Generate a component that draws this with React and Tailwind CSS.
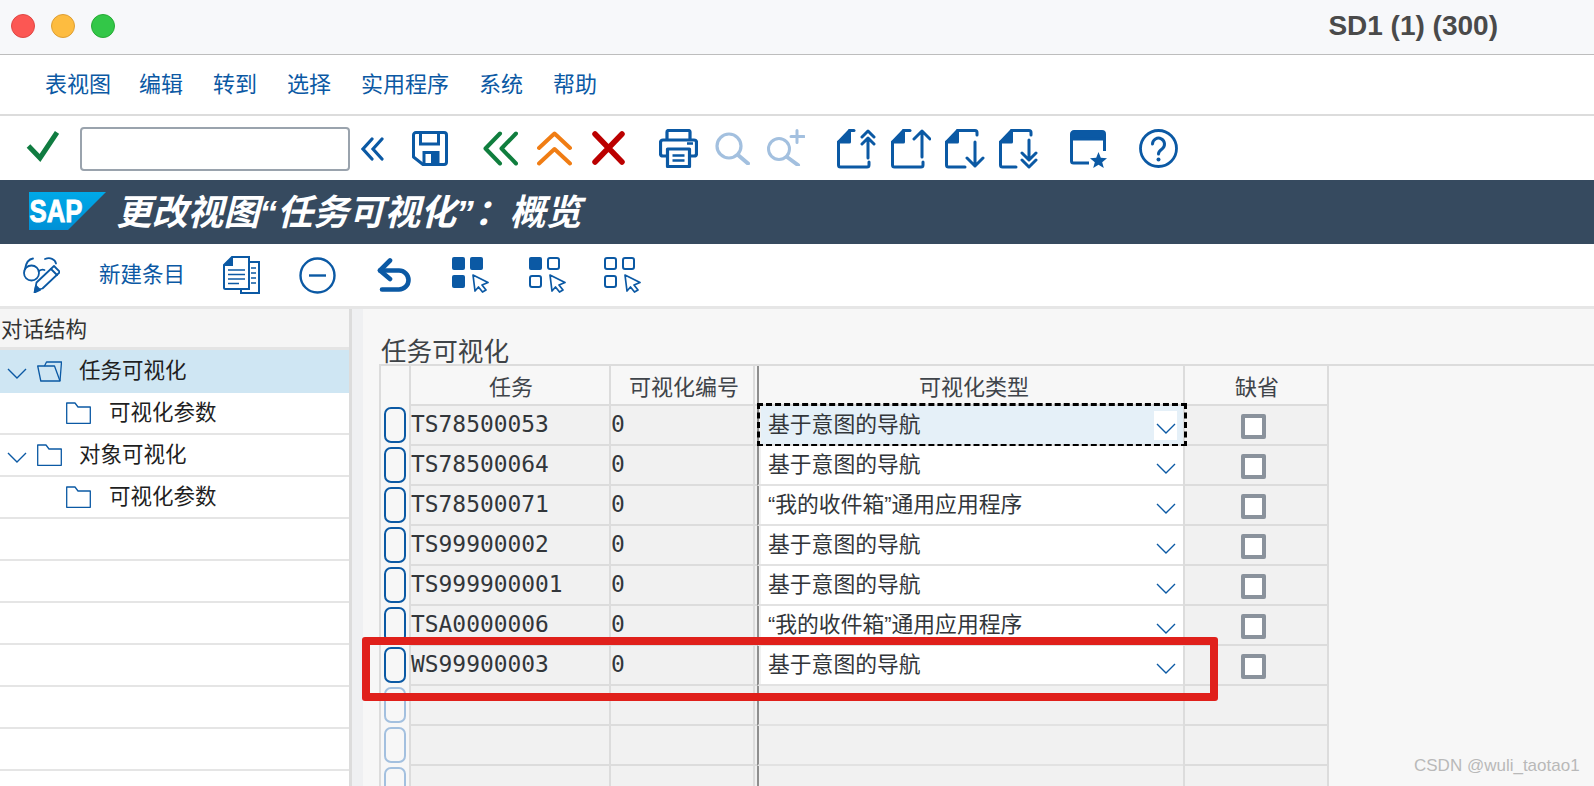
const FONT = { fontFamily: '"Liberation Sans", "Noto Sans CJK SC", sans-serif' };
const BLUE = '#0b59a4';
const PALE = '#a3c0df';

const menus = ['表视图', '编辑', '转到', '选择', '实用程序', '系统', '帮助'];

const rows = [
  { task: 'TS78500053', type: '基于意图的导航', focus: true },
  { task: 'TS78500064', type: '基于意图的导航' },
  { task: 'TS78500071', type: '“我的收件箱”通用应用程序' },
  { task: 'TS99900002', type: '基于意图的导航' },
  { task: 'TS999900001', type: '基于意图的导航' },
  { task: 'TSA0000006', type: '“我的收件箱”通用应用程序' },
  { task: 'WS99900003', type: '基于意图的导航' },
  {},
  {},
  {},
];

const Chevron = ({ className = 'w-[20px] h-[11px]' }) => (
  <svg viewBox="0 0 20 11" className={className} fill="none" stroke={BLUE} strokeWidth="1.4">
    <path d="M1 1 L10 10 L19 1" />
  </svg>
);

const Folder = ({ open }) =>
  open ? (
    <svg viewBox="0 0 25 21" className="w-[25px] h-[21px]" fill="none" stroke={BLUE} strokeWidth="1.3" strokeLinejoin="round">
      <path d="M0.7 5 L3.8 20 H23 L24.5 1 H9.5 L7.5 5 Z" />
      <path d="M7.5 5 H17.5 L23 20" />
    </svg>
  ) : (
    <svg viewBox="0 0 25 22" className="w-[25px] h-[22px]" fill="none" stroke={BLUE} strokeWidth="1.3">
      <path d="M0.7 21.3 V1 H9 L12 5 H24.3 V21.3 Z" strokeLinejoin="round" />
    </svg>
  );

const Check = () => (
  <svg viewBox="0 0 33 32" className="w-[33px] h-[32px] -mt-[4px]" fill="none" stroke="#107c41" strokeWidth="5">
    <path d="M2.5 16 L14 28 L31 2.5" />
  </svg>
);

const DoubleLeft = () => (
  <svg viewBox="0 0 23 24" className="w-[23px] h-[24px] mt-[2px]" fill="none" stroke={BLUE} strokeWidth="3.2" strokeLinecap="round">
    <path d="M11 2 L2 12 L11 22 M21 2 L12 12 L21 22" />
  </svg>
);

const Save = () => (
  <svg viewBox="0 0 36 35" className="w-[36px] h-[35px]" fill="none" stroke={BLUE} strokeWidth="3">
    <path d="M4 1.5 H32 a2.5 2.5 0 0 1 2.5 2.5 V31 a2.5 2.5 0 0 1 -2.5 2.5 H11 L1.5 26 V4 a2.5 2.5 0 0 1 2.5 -2.5 Z" strokeLinejoin="round" />
    <path d="M8.5 2 V13 H26.5 V2" />
    <path d="M12 33 V21.5 H26 V33" />
    <rect x="19" y="22" width="7" height="11" fill={BLUE} stroke="none" />
  </svg>
);

const GreenBack = () => (
  <svg viewBox="0 0 35 35" className="w-[35px] h-[35px]" fill="none" stroke="#107e3e" strokeWidth="4" strokeLinecap="round" strokeLinejoin="round">
    <path d="M17 2.5 L2.5 17.5 L17 32.5 M33 2.5 L18.5 17.5 L33 32.5" />
  </svg>
);

const OrangeUp = () => (
  <svg viewBox="0 0 35 35" className="w-[35px] h-[35px]" fill="none" stroke="#f07d14" strokeWidth="4" strokeLinecap="round" strokeLinejoin="round">
    <path d="M2 17 L17.5 2.5 L33 17 M2 32.5 L17.5 18 L33 32.5" />
  </svg>
);

const RedClose = () => (
  <svg viewBox="0 0 33 34" className="w-[33px] h-[34px]" fill="none" stroke="#bb0000" strokeWidth="5.5" strokeLinecap="round">
    <path d="M3 3 L30 31 M30 3 L3 31" />
  </svg>
);

const Printer = () => (
  <svg viewBox="0 0 39 39" className="w-[39px] h-[39px]" fill="none" stroke={BLUE} strokeWidth="3.2" strokeLinejoin="round">
    <path d="M8 11 V3 a1.5 1.5 0 0 1 1.5 -1.5 H29.5 a1.5 1.5 0 0 1 1.5 1.5 V11" />
    <path d="M8 27 H4 a2.5 2.5 0 0 1 -2.5 -2.5 V13.5 a2.5 2.5 0 0 1 2.5 -2.5 H35 a2.5 2.5 0 0 1 2.5 2.5 V24.5 a2.5 2.5 0 0 1 -2.5 2.5 H31" />
    <rect x="8.5" y="20" width="22" height="17.5" />
    <path d="M13.5 26.5 H25.5 M13.5 31.5 H25.5 M28 14.5 H34" strokeWidth="2.6" />
  </svg>
);

const Search = () => (
  <svg viewBox="0 0 35 33" className="w-[35px] h-[33px]" fill="none" stroke={PALE} strokeWidth="3.2" strokeLinecap="round">
    <circle cx="14" cy="14" r="12" />
    <path d="M23 23 L33 31.5" strokeWidth="4" />
  </svg>
);

const SearchPlus = () => (
  <svg viewBox="0 0 38 37" className="w-[38px] h-[37px]" fill="none" stroke={PALE} strokeWidth="3" strokeLinecap="round">
    <circle cx="12" cy="20" r="10.5" />
    <path d="M20 28 L31 36" strokeWidth="4" />
    <path d="M30 1.5 V13.5 M24 7.5 H37" />
  </svg>
);

// page icon with the folded corner, the arrow goes in as children
const DocArrow = ({ top, bottom, rightTop, rightBottom, children }) => (
  <svg viewBox="0 0 40 40" className="w-[40px] h-[40px]" fill="none" stroke={BLUE} strokeWidth="3" strokeLinecap="round" strokeLinejoin="round">
    <path d="M1.5 13 L12.5 1.5 V13 Z" fill={BLUE} />
    <path d={`M12.5 1.5 H${top}${rightTop ? ' H30 a2 2 0 0 1 2 2 V6' : ''}`} />
    <path d={`M1.5 13 V36 a2 2 0 0 0 2 2 H${bottom}${rightBottom ? ' H30 a2 2 0 0 0 2 -2 V33' : ''}`} />
    {children}
  </svg>
);

const StarWindow = () => (
  <svg viewBox="0 0 37 38" className="w-[37px] h-[38px]" fill="none" stroke={BLUE} strokeWidth="3" strokeLinejoin="round">
    <path d="M1.5 4 a2.5 2.5 0 0 1 2.5 -2.5 H32 a2.5 2.5 0 0 1 2.5 2.5 V9 H1.5 Z" fill={BLUE} />
    <path d="M1.5 9 V31 a2 2 0 0 0 2 2 H19 M34.5 9 V21" />
    <polygon points="28.5,22 30.8,27.8 37,28.2 32.2,32.2 33.8,38 28.5,34.8 23.2,38 24.8,32.2 20,28.2 26.2,27.8" fill={BLUE} stroke="none" />
  </svg>
);

const Help = () => (
  <svg viewBox="0 0 39 39" className="w-[39px] h-[39px]" fill="none" stroke={BLUE} strokeWidth="2.8" strokeLinecap="round">
    <circle cx="19.5" cy="19.5" r="18" />
    <path d="M13.5 15 a6 6 0 1 1 9.5 5 c-2.5 1.7 -3.5 2.7 -3.5 5" strokeWidth="3" />
    <circle cx="19.5" cy="30.5" r="2" fill={BLUE} stroke="none" />
  </svg>
);

const SapLogo = () => (
  <svg viewBox="0 0 77 38" className="w-[77px] h-[38px]">
    <defs>
      <linearGradient id="sapfill" x1="0" y1="0" x2="0" y2="1">
        <stop offset="0" stopColor="#00a9e8" />
        <stop offset="1" stopColor="#0090d6" />
      </linearGradient>
    </defs>
    <polygon points="0,0 77,0 39,38 0,38" fill="url(#sapfill)" />
    <text x="0.5" y="30" fill="#fff" stroke="#fff" strokeWidth="0.9" fontFamily="Liberation Sans" fontWeight="bold" fontSize="32" textLength="53" lengthAdjust="spacingAndGlyphs">SAP</text>
  </svg>
);

const GlassesPen = () => (
  <svg viewBox="0 0 37 36" className="w-[37px] h-[36px]" fill="none" stroke={BLUE} strokeWidth="1.8" strokeLinejoin="round" strokeLinecap="round">
    <circle cx="8.5" cy="16" r="7.5" />
    <path d="M2 12 C3 6 6 2 10 1.5" />
    <path d="M16 14 C18 12.5 20 12.5 21.5 13" />
    <path d="M22 2 C27 0 32 2 33 6.5" />
    <path d="M12 33.5 L13.5 25.5 L31 9 L37 15 L19.5 31.5 Z" />
    <path d="M11.5 35.5 L13 29 L17 33 Z" fill={BLUE} />
    <path d="M28 12 L34 18" />
  </svg>
);

const CopyDoc = () => (
  <svg viewBox="0 0 37 38" className="w-[37px] h-[38px]" fill="none" stroke={BLUE} strokeWidth="2">
    <path d="M1 9 L9 1 V9 Z" fill={BLUE} />
    <path d="M9 1 H26 V33 H2.5 a1.5 1.5 0 0 1 -1.5 -1.5 V9" />
    <path d="M26 6 H36 V37 H18 V33" />
    <path d="M5 14 H22 M5 18.5 H22 M5 23 H22 M5 27.5 H16 M28 12 H33 M28 17 H33 M28 22 H33 M28 27 H33" strokeWidth="1.6" />
  </svg>
);

const MinusCircle = () => (
  <svg viewBox="0 0 37 37" className="w-[37px] h-[37px]" fill="none" stroke={BLUE} strokeWidth="2.4">
    <circle cx="18.5" cy="18.5" r="17" />
    <path d="M10 18.5 H27" />
  </svg>
);

const Undo = () => (
  <svg viewBox="0 0 35 34" className="w-[35px] h-[34px]" fill="none" stroke={BLUE} strokeWidth="4.6" strokeLinecap="round" strokeLinejoin="round">
    <path d="M13 2.5 L3 12.5 L13 21" />
    <path d="M3 12.5 H22 a9 9 0 0 1 0 19 H5" />
  </svg>
);

const Cursor = () => (
  <path d="M21 18 L36 25.5 L30 28 L34 33 L30.5 35 L26.5 30 L23 34 Z" fill="#fff" stroke={BLUE} strokeWidth="1.7" strokeLinejoin="round" />
);

const SelectIcon = ({ filled }) => {
  const square = (x, y, on) => (
    <rect x={on ? x : x + 1} y={on ? y : y + 1} width={on ? 13 : 11} height={on ? 13 : 11} rx="2" fill={on ? BLUE : 'none'} stroke={on ? 'none' : BLUE} strokeWidth="2" />
  );
  return (
    <svg viewBox="0 0 37 36" className="w-[37px] h-[36px]">
      {square(0, 0, filled >= 1)}
      {square(18, 0, filled >= 2)}
      {square(0, 18, filled >= 2)}
      <Cursor />
    </svg>
  );
};

const TreeRow = ({ text, sub, open, selected }) => (
  <div className={`flex items-center text-[21.5px] text-[#1f1f1f] ${selected ? 'bg-[#cfe6f3] h-[43px]' : 'h-[42px] border-b-2 border-[#e5e5e5]'}`}>
    {sub ? (
      <div className="ml-[66px]"><Folder /></div>
    ) : (
      <>
        <div className="ml-[7px] mt-[4px]"><Chevron /></div>
        <div className="ml-[10px]"><Folder open={open} /></div>
      </>
    )}
    <span className={sub ? 'ml-[18px]' : 'ml-[17px]'}>{text}</span>
  </div>
);

const HeaderCell = ({ className, children }) => (
  <div className={`flex items-center justify-center pt-[4px] border-l-2 border-b-2 border-[#dcdcdc] bg-[#f7f7f7] h-[40px] text-[22px] text-[#3f444a] ${className}`}>
    {children}
  </div>
);

const TableRow = ({ row, index }) => {
  const filled = !!row.task;
  return (
    <div className="flex h-[40px] relative">
      <div className="w-[28px] bg-[#f7f7f7] pl-[3px] pt-[1px]">
        <div className={`w-[22px] h-[36px] rounded-[7px] border-2 ${index < 7 ? 'border-[#0b59a4]' : 'border-[#a3c0df]'}`} />
      </div>
      <div className="w-[200px] border-l-2 border-b-2 border-[#dcdcdc] bg-[#f1f1f1] pb-[2px] flex items-center font-['DejaVu_Sans_Mono'] text-[22.9px] text-[#32363a]">
        {row.task}
      </div>
      <div className="w-[144px] border-l-2 border-b-2 border-[#dcdcdc] bg-[#f1f1f1] pb-[2px] flex items-center font-['DejaVu_Sans_Mono'] text-[22.9px] text-[#32363a]">
        {filled && '0'}
      </div>
      <div className="w-[4px] border-l-2 border-b-2 border-[#dcdcdc] bg-[#f1f1f1]" />
      <div className="w-[426px] border-l-2 border-[#8f8f8f] border-b-2 border-b-[#e2e2e2] bg-[#f1f1f1] pl-[2px]">
        {filled && (
          <div className={`h-full flex items-center justify-between pl-[7px] pr-[6px] text-[21.8px] text-[#32363a] ${row.focus ? 'bg-[#e5f0f8]' : 'bg-white'}`}>
            <span>{row.type}</span>
            <div className={`w-[23px] h-[29px] flex items-end justify-center pb-[6px] mt-[1px] ${row.focus ? 'bg-white' : ''}`}>
              <Chevron />
            </div>
          </div>
        )}
      </div>
      <div className="w-[146px] border-x-2 border-b-2 border-[#dcdcdc] bg-[#f1f1f1] pl-[56px] pt-[8px]">
        {filled && <div className="w-[25px] h-[25px] rounded-[2px] border-[4px] border-[#8a929c] bg-white" />}
      </div>
      {row.focus && (
        <div className="absolute left-[376px] -top-[3px] w-[430px] h-[44px] border-[3px] border-dashed border-black" />
      )}
    </div>
  );
};

export default function App() {
  return (
    <div className="relative w-[1594px] h-[786px] overflow-hidden bg-white" style={FONT}>
      <div className="h-[55px] flex items-center justify-between pl-[11px] pr-[96px] bg-[#f7f8fa] border-b border-[#bdbdbd]">
        <div className="flex gap-4 -mt-[2px]">
          <div className="w-[24px] h-[24px] rounded-full bg-[#fc5753] border border-[#df4744]" />
          <div className="w-[24px] h-[24px] rounded-full bg-[#fdbc40] border border-[#de9f34]" />
          <div className="w-[24px] h-[24px] rounded-full bg-[#33c748] border border-[#27aa35]" />
        </div>
        <div className="text-[28px] font-bold text-[#4a4a4a] -mt-[3px]">SD1 (1) (300)</div>
      </div>

      <div className="h-[61px] flex items-center gap-[30px] pl-[45px] border-b-2 border-[#dcdcdc] text-[22px] text-[#0b59a4]">
        {menus.map((m, i) => (
          <span key={m} className={i === 0 ? '-mr-[2px]' : ''}>{m}</span>
        ))}
      </div>

      <div className="h-[64px] flex items-center">
        <div className="ml-[26px]"><Check /></div>
        <div className="ml-[21px] w-[270px] h-[44px] mt-[2px] rounded-[4px] border-2 border-[#9aa3ad] bg-white" />
        <div className="ml-[11px]"><DoubleLeft /></div>
        <div className="ml-[28px]"><Save /></div>
        <div className="ml-[35px]"><GreenBack /></div>
        <div className="ml-[19px]"><OrangeUp /></div>
        <div className="ml-[20px]"><RedClose /></div>
        <div className="ml-[34px]"><Printer /></div>
        <div className="ml-[17px]"><Search /></div>
        <div className="ml-[17px] -mt-[2px]"><SearchPlus /></div>
        <div className="ml-[32px] mt-[1px]">
          <DocArrow top="17" bottom="30" rightBottom>
            <path d="M31 12 V29 M25 15 L31 9 L37 15 M25 8 L31 2 L37 8" />
          </DocArrow>
        </div>
        <div className="ml-[14px] mt-[1px]">
          <DocArrow top="19" bottom="30" rightBottom>
            <path d="M31 2 V28 M23 10 L31 2 L39 10" />
          </DocArrow>
        </div>
        <div className="ml-[14px] mt-[1px]">
          <DocArrow top="30" rightTop bottom="20">
            <path d="M30 13 V37 M22 29 L30 37 L38 29" />
          </DocArrow>
        </div>
        <div className="ml-[14px] mt-[1px]">
          <DocArrow top="30" rightTop bottom="17">
            <path d="M30 11 V29 M23 24 L30 31 L37 24 M23 31 L30 38 L37 31" />
          </DocArrow>
        </div>
        <div className="ml-[31px] mt-[2px]"><StarWindow /></div>
        <div className="ml-[32px]"><Help /></div>
      </div>

      <div className="h-[64px] bg-[#364a5f] flex items-center pl-[29px]">
        <div className="-mt-[2px]"><SapLogo /></div>
        <h1 className="ml-[10px] mt-[3px] text-[35.8px] font-bold italic text-white">更改视图“任务可视化”：概览</h1>
      </div>

      <div className="h-[65px] flex items-center border-b-[3px] border-[#e6e6e6]">
        <div className="ml-[23px]"><GlassesPen /></div>
        <span className="ml-[39px] text-[21.5px] text-[#0b59a4]">新建条目</span>
        <div className="ml-[38px]"><CopyDoc /></div>
        <div className="ml-[39px]"><MinusCircle /></div>
        <div className="ml-[41px]"><Undo /></div>
        <div className="ml-[40px]"><SelectIcon filled={2} /></div>
        <div className="ml-[40px]"><SelectIcon filled={1} /></div>
        <div className="ml-[38px]"><SelectIcon filled={0} /></div>
      </div>

      <div className="flex h-[477px]">
        <div className="w-[352px] border-r-[3px] border-[#dcdcdc] shrink-0">
          <div className="h-[41px] flex items-center pl-[1px] pt-[5px] bg-[#f5f5f5] border-b-[3px] border-[#e4e4e4] text-[21.5px] text-[#333]">
            对话结构
          </div>
          <TreeRow text="任务可视化" open selected />
          <TreeRow text="可视化参数" sub />
          <TreeRow text="对象可视化" />
          <TreeRow text="可视化参数" sub />
          {Array.from({ length: 7 }).map((_, i) => (
            <div key={i} className="h-[42px] border-b-2 border-[#e5e5e5]" />
          ))}
        </div>

        <div className="flex-1 flex min-w-0">
          <div className="w-[11px] bg-[#eff0f2]" />
          <div className="flex-1 bg-[#f7f7f7] min-w-0">
            <div className="h-[55px] flex items-end pl-[18px] text-[25.6px] leading-[24px] text-[#3e4347]">
              任务可视化
            </div>
            <div className="ml-[16px] border-t-2 border-[#dcdcdc]">
              <div className="flex border-l-2 border-[#dcdcdc] w-[950px]">
                <div className="flex flex-col">
                  <div className="flex">
                    <div className="w-[28px] h-[40px] bg-[#f7f7f7]" />
                    <HeaderCell className="w-[200px] pl-[2px]">任务</HeaderCell>
                    <HeaderCell className="w-[144px] pl-[4px]">可视化编号</HeaderCell>
                    <HeaderCell className="w-[4px]" />
                    <HeaderCell className="w-[426px] border-l-[#8f8f8f] pl-[6px]">可视化类型</HeaderCell>
                    <HeaderCell className="w-[146px] border-r-2 pl-[2px]">缺省</HeaderCell>
                  </div>
                  {rows.map((row, i) => (
                    <TableRow key={i} row={row} index={i} />
                  ))}
                </div>
              </div>
            </div>
          </div>
        </div>
      </div>

      {/* red marker drawn over the screenshot */}
      <div className="absolute left-[362px] top-[637px] w-[856px] h-[64px] border-[8px] border-[#e0201b] rounded-[3px]" />
      <div className="absolute left-[1414px] top-[756px] text-[17px] leading-[20px] text-[#b9b9b9]">CSDN @wuli_taotao1</div>
    </div>
  );
}
